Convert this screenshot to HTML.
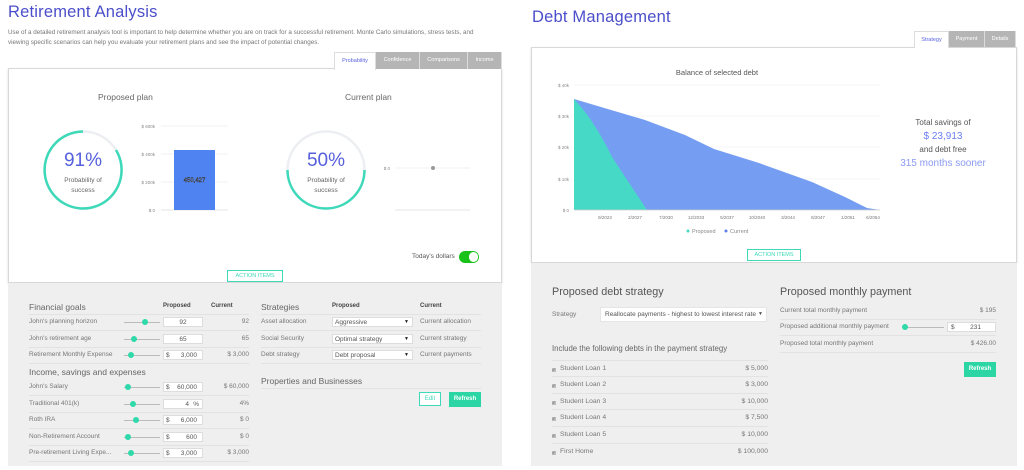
<!DOCTYPE html>
<html><head><meta charset="utf-8"><style>
*{box-sizing:border-box;margin:0;padding:0}
body{width:1024px;height:470px;background:#fff;font-family:"Liberation Sans",sans-serif;color:#666;position:relative;overflow:hidden}
.a{position:absolute;white-space:nowrap}
.t{font-size:16.5px;color:#4b4fc9;letter-spacing:0.2px}
.tab{position:absolute;background:#b5b5b5;color:#fff;font-size:5.5px;text-align:center;line-height:17px;border-right:1px solid #ddd}
.tab.on{background:#fff;color:#5a64e0;border:1px solid #ddd;border-bottom:none}
.card{position:absolute;background:#fff;border:1px solid #d8d8d8;box-shadow:0 1px 2px rgba(0,0,0,.15)}
.gray{position:absolute;background:#efefef}
.s{font-size:6.5px;color:#777}
.h{font-size:8.5px;color:#666}
.hb{font-size:10.8px;color:#555}
.line{position:absolute;height:1px;background:#e2e2e2}
.inp{position:absolute;background:#fff;border:1px solid #ddd;height:10px;font-size:6.5px;line-height:9px;color:#555}
.sl{position:absolute;height:1px;background:#bbb}
.th{position:absolute;width:6px;height:6px;border-radius:3px;background:#2fd9a9}
.btn{position:absolute;font-size:6px;text-align:center;line-height:14px}
</style></head><body>
<!-- LEFT -->
<div class="a t" style="left:8px;top:3px">Retirement Analysis</div>
<div class="a" style="left:8px;top:28px;font-size:6.3px;line-height:10px;color:#777">Use of a detailed retirement analysis tool is important to help determine whether you are on track for a successful retirement. Monte Carlo simulations, stress tests, and<br>viewing specific scenarios can help you evaluate your retirement plans and see the impact of potential changes.</div>
<div class="card" style="left:8px;top:68px;width:494px;height:215px"></div>
<div class="tab on" style="left:334px;top:52px;width:42px;height:18px">Probability</div>
<div class="tab" style="left:376px;top:52px;width:44px;height:17px">Confidence</div>
<div class="tab" style="left:420px;top:52px;width:48px;height:17px">Comparisons</div>
<div class="tab" style="left:468px;top:52px;width:34px;height:17px">Income</div>
<div class="a h" style="left:98px;top:92px">Proposed plan</div>
<div class="a h" style="left:345px;top:92px">Current plan</div>
<svg class="a" style="left:0;top:0" width="512" height="290">
<circle cx="83" cy="170" r="38.5" fill="none" stroke="#eceef2" stroke-width="2.5"/>
<path d="M83 131.5 A38.5 38.5 0 1 0 116 150" fill="none" stroke="#3dd9b9" stroke-width="2.5"/>
<circle cx="326" cy="170" r="38.5" fill="none" stroke="#eceef2" stroke-width="2.5"/>
<path d="M287.5 170 A38.5 38.5 0 0 0 364.5 170" fill="none" stroke="#3dd9b9" stroke-width="2.5"/>
<g stroke="#eee" stroke-width="0.7"><line x1="161" y1="126" x2="228" y2="126"/><line x1="161" y1="154" x2="228" y2="154"/><line x1="161" y1="182" x2="228" y2="182"/><line x1="395" y1="168" x2="470" y2="168"/></g>
<line x1="161" y1="210" x2="228" y2="210" stroke="#ddd" stroke-width="0.8"/>
<line x1="395" y1="210" x2="470" y2="210" stroke="#ddd" stroke-width="0.8"/>
<rect x="174" y="150" width="41" height="60" fill="#5083f2"/>
<circle cx="433" cy="168" r="2" fill="#999"/>
<g font-size="4.5" fill="#888" text-anchor="end"><text x="155" y="128">$ 600k</text><text x="155" y="156">$ 400k</text><text x="155" y="184">$ 200k</text><text x="155" y="212">$ 0</text><text x="390" y="170">$ 0</text></g>
<text x="194.5" y="182" font-size="6" fill="#fff" stroke="#333" stroke-width="0.4" text-anchor="middle">450,427</text>
<text x="83" y="166" font-size="19" fill="#5560dd" text-anchor="middle">91%</text>
<text x="326" y="166" font-size="19" fill="#5560dd" text-anchor="middle">50%</text>
<g font-size="6.5" fill="#666" text-anchor="middle"><text x="83" y="182">Probability of</text><text x="83" y="192">success</text><text x="326" y="182">Probability of</text><text x="326" y="192">success</text></g>
</svg>
<div class="a" style="left:412px;top:253px;font-size:6.5px;color:#555">Today's dollars</div>
<div class="a" style="left:459px;top:251px;width:20px;height:12px;border-radius:6px;background:#18c21a"></div>
<div class="a" style="left:469px;top:252px;width:9px;height:10px;border-radius:5px;background:#fff"></div>
<div class="gray" style="left:8px;top:283px;width:494px;height:183px"></div>
<div class="a" style="left:227px;top:270px;width:56px;height:12px;border:1px solid #3dd9b9;background:#fff;color:#3dd9b9;font-size:5.5px;text-align:center;line-height:10px">ACTION ITEMS</div>
<div class="a h" style="left:29px;top:302px">Financial goals</div>
<div class="a" style="left:163px;top:303px;font-size:6px;color:#444;font-weight:bold">Proposed</div>
<div class="a" style="left:211px;top:303px;font-size:6px;color:#444;font-weight:bold">Current</div>
<div class="a h" style="left:29px;top:367px">Income, savings and expenses</div>
<div class="a h" style="left:261px;top:302px">Strategies</div>
<div class="a" style="left:332px;top:303px;font-size:6px;color:#444;font-weight:bold">Proposed</div>
<div class="a" style="left:420px;top:303px;font-size:6px;color:#444;font-weight:bold">Current</div>
<div class="a h" style="left:261px;top:376px">Properties and Businesses</div>
<div class="line" style="left:29px;top:314px;width:220px"></div>
<div class="line" style="left:261px;top:314px;width:220px"></div>
<div class="line" style="left:261px;top:388px;width:220px"></div>
<div class="btn" style="left:419px;top:392px;width:22px;height:14px;border:1px solid #3dd9b9;background:#fff;color:#3dd9b9;line-height:12px">Edit</div>
<div class="btn" style="left:449px;top:392px;width:32px;height:15px;background:#2bd6a4;color:#fff;font-weight:bold">Refresh</div>
<div id="rows"></div>
<!-- RIGHT -->
<div class="a t" style="left:532px;top:8px">Debt Management</div>
<div class="card" style="left:531px;top:47px;width:486px;height:216px"></div>
<div class="tab on" style="left:914px;top:31px;width:35px;height:17px">Strategy</div>
<div class="tab" style="left:949px;top:31px;width:36px;height:16px">Payment</div>
<div class="tab" style="left:985px;top:31px;width:31px;height:16px">Details</div>
<svg class="a" style="left:512px;top:0" width="512" height="262">
<text x="205" y="75" font-size="7.5" fill="#555" text-anchor="middle">Balance of selected debt</text>
<g stroke="#f0f0f0" stroke-width="0.7"><line x1="62" y1="85" x2="368" y2="85"/><line x1="62" y1="116" x2="368" y2="116"/><line x1="62" y1="147" x2="368" y2="147"/><line x1="62" y1="179" x2="368" y2="179"/></g>
<g font-size="4.5" fill="#888" text-anchor="end"><text x="57" y="87">$ 40k</text><text x="57" y="118">$ 30k</text><text x="57" y="149">$ 20k</text><text x="57" y="181">$ 10k</text><text x="57" y="212">$ 0</text></g>
<path d="M62 99 L133 120 L173 135 L202 149 L247 163 L300 182 L333 197 L355 208 L368 210 L62 210Z" fill="#759ef2"/>
<path d="M62 99 Q82 120 100 157 L135 210 L62 210Z" fill="#46d9c6"/>
<line x1="62" y1="210" x2="368" y2="210" stroke="#ccc" stroke-width="0.8"/>
<g font-size="4.5" fill="#777" text-anchor="middle"><text x="93" y="219">9/2023</text><text x="123" y="219">2/2027</text><text x="154" y="219">7/2030</text><text x="184" y="219">12/2033</text><text x="215" y="219">5/2037</text><text x="245" y="219">10/2040</text><text x="276" y="219">3/2044</text><text x="306" y="219">8/2047</text><text x="336" y="219">1/2051</text><text x="361" y="219">6/2054</text></g>
<circle cx="176" cy="231" r="1.5" fill="#46d9c6"/><text x="180" y="233" font-size="5.5" fill="#888">Proposed</text>
<circle cx="214" cy="231" r="1.5" fill="#5a7ee8"/><text x="218" y="233" font-size="5.5" fill="#888">Current</text>
<g text-anchor="middle"><text x="431" y="125" font-size="8" fill="#555">Total savings of</text><text x="431" y="139" font-size="10" fill="#6a7ef0">$ 23,913</text><text x="431" y="152" font-size="8" fill="#555">and debt free</text><text x="431" y="166" font-size="10" fill="#8a9af2">315 months sooner</text></g>
</svg>
<div class="gray" style="left:531px;top:263px;width:486px;height:203px"></div>
<div class="a" style="left:747px;top:249px;width:54px;height:12px;border:1px solid #3dd9b9;background:#fff;color:#3dd9b9;font-size:5.5px;text-align:center;line-height:10px">ACTION ITEMS</div>
<div class="a hb" style="left:552px;top:286px">Proposed debt strategy</div>
<div class="a hb" style="left:780px;top:286px">Proposed monthly payment</div>
<div class="a s" style="left:552px;top:311px">Strategy</div>
<div class="inp" style="left:600px;top:307px;width:167px;height:15px;line-height:13px;padding-left:4px;border-color:#e5e5e5">Reallocate payments - highest to lowest interest rate<span style="position:absolute;right:3px;font-size:5px">▼</span></div>
<div class="a h" style="left:552px;top:344px;font-size:7.8px">Include the following debts in the payment strategy</div>
<div id="debts"></div>
<div class="btn" style="left:964px;top:362px;width:32px;height:15px;background:#2bd6a4;color:#fff;font-weight:bold">Refresh</div>
<script>
var r=document.getElementById('rows'),h='';
function row(y,l,th,v,cur,pre,suf){h+='<div class="a s" style="left:29px;top:'+(y-4)+'px">'+l+'</div><div class="sl" style="left:124px;top:'+y+'px;width:36px"></div><div class="th" style="left:'+th+'px;top:'+(y-3)+'px"></div><div class="inp" style="left:163px;top:'+(y-5)+'px;width:40px;text-align:'+(pre||suf?'left':'center')+'">'+(pre?'<span style="margin-left:2px">$</span><span style="position:absolute;right:'+(suf?13:5)+'px">'+v+'</span>':(suf?'<span style="position:absolute;right:13px">'+v+'</span>':v))+(suf?'<span style="position:absolute;right:3px">%</span>':'')+'</div><div class="a s" style="right:'+(1024-249)+'px;top:'+(y-4)+'px">'+cur+'</div><div class="line" style="left:29px;top:'+(y+8)+'px;width:220px"></div>';}
row(322,"John's planning horizon",142,"92","92");
row(339,"John's retirement age",131,"65","65");
row(355,"Retirement Monthly Expense",128,"3,000","$ 3,000",1);
row(387,"John's Salary",125,"60,000","$ 60,000",1);
row(404,"Traditional 401(k)",130,"4","4%",0,1);
row(420,"Roth IRA",133,"6,000","$ 0",1);
row(437,"Non-Retirement Account",125,"600","$ 0",1);
row(453,"Pre-retirement Living Expe...",128,"3,000","$ 3,000",1);
[[322,"Asset allocation","Aggressive","Current allocation"],[339,"Social Security","Optimal strategy","Current strategy"],[355,"Debt strategy","Debt proposal","Current payments"]].forEach(function(a){var y=a[0];h+='<div class="a s" style="left:261px;top:'+(y-4)+'px">'+a[1]+'</div><div class="inp" style="left:332px;top:'+(y-5)+'px;width:81px;padding-left:2px">'+a[2]+'<span style="position:absolute;right:3px;font-size:5px;color:#222">▼</span></div><div class="a s" style="left:420px;top:'+(y-4)+'px">'+a[3]+'</div><div class="line" style="left:261px;top:'+(y+8)+'px;width:220px"></div>';});
r.innerHTML=h;h='';
[[369,"Student Loan 1","$ 5,000"],[385,"Student Loan 2","$ 3,000"],[402,"Student Loan 3","$ 10,000"],[418,"Student Loan 4","$ 7,500"],[435,"Student Loan 5","$ 10,000"],[452,"First Home","$ 100,000"]].forEach(function(a){var y=a[0];h+='<div class="line" style="left:552px;top:'+(y-9)+'px;width:216px"></div><div class="a" style="left:552px;top:'+(y-1)+'px;width:4px;height:4px;background:#bbb;font-size:4px;line-height:4px;color:#333">✓</div><div class="a s" style="left:560px;top:'+(y-4)+'px;font-size:6.8px">'+a[1]+'</div><div class="a s" style="right:256px;top:'+(y-4)+'px;font-size:6.8px">'+a[2]+'</div>';});
[[311,"Current total monthly payment","$ 195"],[327,"Proposed additional monthly payment",""],[344,"Proposed total monthly payment","$ 426.00"]].forEach(function(a,i){var y=a[0];h+='<div class="a s" style="left:780px;top:'+(y-4)+'px">'+a[1]+'</div><div class="a s" style="right:28px;top:'+(y-4)+'px">'+a[2]+'</div><div class="line" style="left:780px;top:'+(y+8)+'px;width:216px"></div>';});
h+='<div class="sl" style="left:904px;top:327px;width:40px"></div><div class="th" style="left:902px;top:324px"></div><div class="inp" style="left:947px;top:322px;width:49px;padding-left:3px">$<span style="position:absolute;right:14px">231</span></div>';
document.getElementById('debts').innerHTML=h;
</script>
</body></html>
